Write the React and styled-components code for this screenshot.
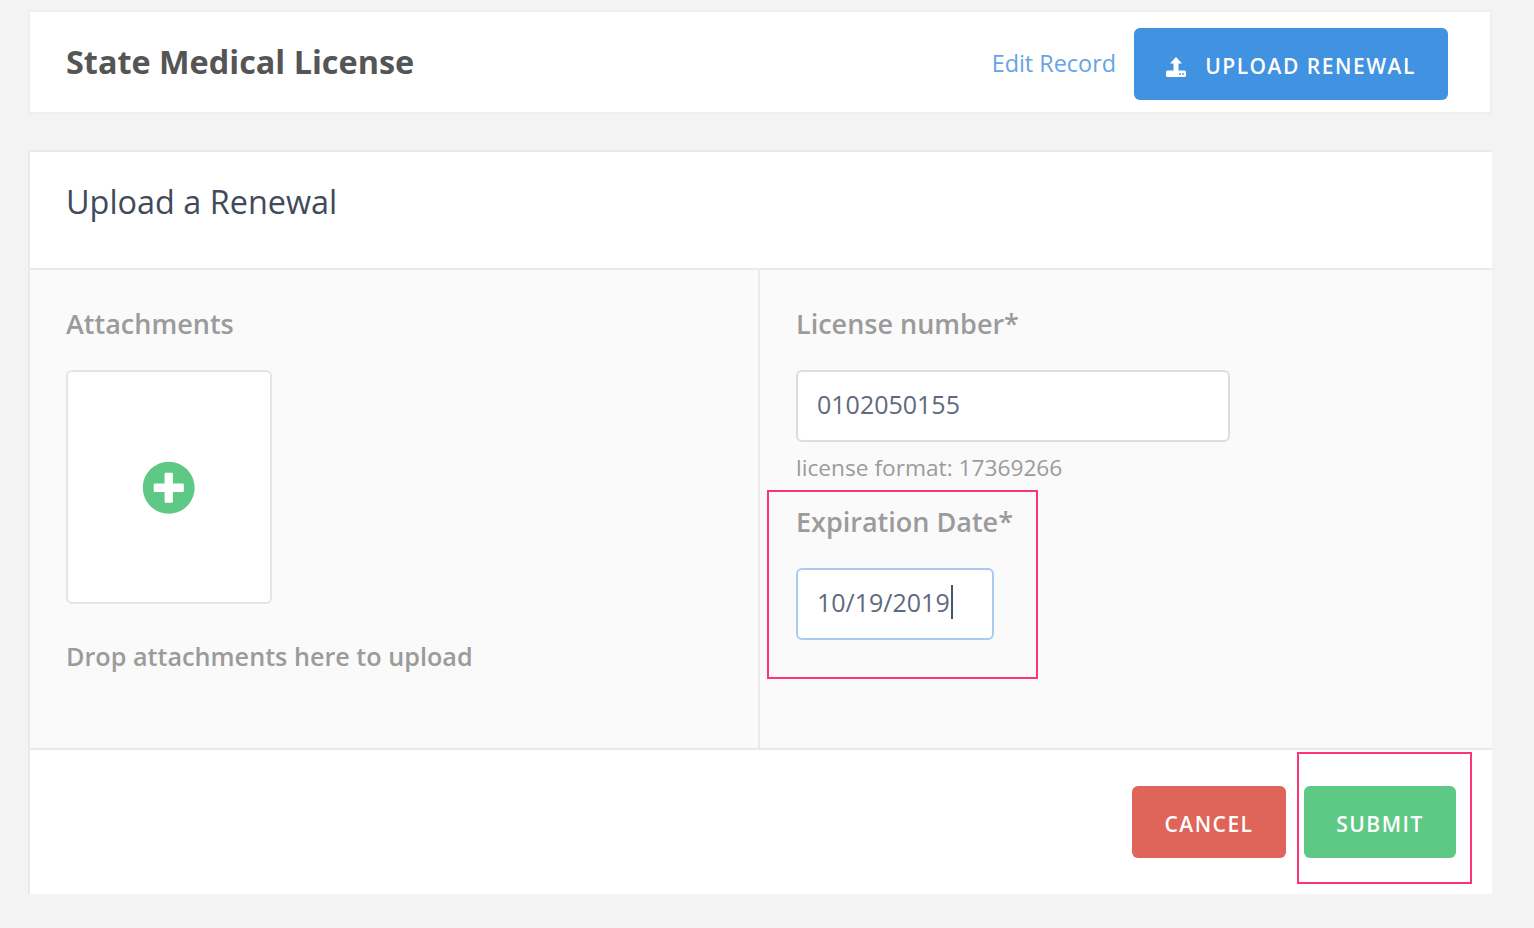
import React from 'react';
import styled, { createGlobalStyle } from 'styled-components';
import { FaPlusCircle } from 'react-icons/fa';

const GlobalStyle = createGlobalStyle`
  html, body {
    margin: 0;
    padding: 0;
    background: #f3f3f3;
    font-family: "Open Sans", "Liberation Sans", sans-serif;
  }
  * {
    box-sizing: border-box;
  }
`;

const UploadIcon = () => (
  <UploadGlyph width="20" height="20" viewBox="0 0 20 20" fill="none">
    <path d="M10 0 L16 6.5 H12.5 V14 H7.5 V6.5 H4 Z" fill="#fff" />
    <rect x="0" y="13.5" width="20" height="6.5" rx="1.5" fill="#fff" />
    <circle cx="14" cy="17" r="0.9" fill="#4192e0" />
    <circle cx="17" cy="17" r="0.9" fill="#4192e0" />
  </UploadGlyph>
);

const App = () => {
  return (
    <Page>
      <GlobalStyle />
      <HeaderCard>
        <Title>State Medical License</Title>
        <HeaderActions>
          <EditLink>Edit Record</EditLink>
          <UploadButton>
            <UploadIcon />
            UPLOAD RENEWAL
          </UploadButton>
        </HeaderActions>
      </HeaderCard>

      <FormCard>
        <FormHeading>Upload a Renewal</FormHeading>
        <FormBody>
          <LeftColumn>
            <Label>Attachments</Label>
            <DropZone>
              <PlusIcon />
            </DropZone>
            <DropHint>Drop attachments here to upload</DropHint>
          </LeftColumn>
          <RightColumn>
            <Label>License number*</Label>
            <TextField $width={434}>0102050155</TextField>
            <FieldHint>license format: 17369266</FieldHint>
            <DateLabel>
              Expiration Date*
              <Highlight $top={-12} $left={-29} $width={271} $height={189} />
            </DateLabel>
            <TextField $width={198} $focused>
              10/19/2019
              <Caret />
            </TextField>
          </RightColumn>
        </FormBody>
        <FormFooter>
          <ActionButton $color="#df6459">CANCEL</ActionButton>
          <SubmitWrap>
            <ActionButton $color="#5ec984" $width={152}>SUBMIT</ActionButton>
            <Highlight $top={-34} $left={-7} $width={175} $height={132} />
          </SubmitWrap>
        </FormFooter>
      </FormCard>
    </Page>
  );
};

export default App;

const Page = styled.div`
  width: 1534px;
  height: 928px;
  padding: 10px 42px 0 28px;
  overflow: hidden;
`;

const HeaderCard = styled.div`
  height: 104px;
  display: flex;
  align-items: center;
  justify-content: space-between;
  padding: 0 42px 0 36px;
  background: #fff;
  border: 2px solid #eeeeee;
`;

const Title = styled.h1`
  margin: 0 0 2px;
  font-size: 32.4px;
  font-weight: 700;
  color: #555555;
`;

const HeaderActions = styled.div`
  display: flex;
  align-items: center;
  gap: 18px;
  margin-top: 4px;
`;

const EditLink = styled.a`
  margin-bottom: 3px;
  font-size: 23.4px;
  color: #65a4e6;
  cursor: pointer;
`;

const UploadButton = styled.button`
  width: 314px;
  height: 72px;
  display: flex;
  align-items: center;
  justify-content: center;
  gap: 19px;
  padding: 4px 0 0;
  border: none;
  border-radius: 6px;
  background: #4192e0;
  color: #fff;
  font-family: inherit;
  font-size: 21px;
  font-weight: 600;
  letter-spacing: 1.5px;
`;

const UploadGlyph = styled.svg`
  margin-top: 1px;
`;

const FormCard = styled.div`
  height: 744px;
  margin-top: 36px;
  display: flex;
  flex-direction: column;
  background: #fff;
  border-top: 2px solid #eaeaea;
  border-left: 2px solid #eaeaea;
`;

const FormHeading = styled.h2`
  height: 118px;
  margin: 0;
  padding: 27px 36px 0;
  font-size: 32.4px;
  font-weight: 400;
  color: #414a5a;
  border-bottom: 2px solid #eaeaea;
`;

const FormBody = styled.div`
  height: 480px;
  display: flex;
  background: #fafafa;
  border-bottom: 2px solid #eaeaea;
`;

const LeftColumn = styled.div`
  width: 730px;
  padding: 34px 36px 0;
  border-right: 2px solid #eaeaea;
`;

const RightColumn = styled.div`
  flex: 1;
  padding: 34px 36px 0;
`;

const Label = styled.div`
  height: 40px;
  font-size: 27px;
  line-height: 40px;
  font-weight: 600;
  color: #9b9b9b;
`;

const DateLabel = styled(Label)`
  position: relative;
  margin-top: 17px;
`;

const DropZone = styled.div`
  width: 206px;
  height: 234px;
  margin-top: 26px;
  display: flex;
  align-items: center;
  justify-content: center;
  background: #fff;
  border: 2px solid #e5e5e5;
  border-radius: 6px;
`;

const PlusIcon = styled(FaPlusCircle)`
  margin-top: 2px;
  color: #5ec984;
  font-size: 53.5px;
`;

const DropHint = styled.div`
  margin-top: 33px;
  font-size: 25.2px;
  line-height: 38px;
  font-weight: 600;
  color: #9b9b9b;
`;

const TextField = styled.div`
  width: ${(props) => props.$width}px;
  height: 72px;
  margin-top: 26px;
  display: flex;
  align-items: center;
  padding: 0 19px 4px;
  background: #fff;
  border: 2px solid ${(props) => (props.$focused ? '#a9cbf0' : '#dddddd')};
  border-radius: 6px;
  font-size: 25px;
  color: #606a7e;
`;

const Caret = styled.span`
  width: 2px;
  height: 34px;
  margin-left: 1px;
  background: #4a5568;
`;

const FieldHint = styled.div`
  margin-top: 9px;
  font-size: 22.7px;
  line-height: 34px;
  color: #9b9b9b;
`;

const Highlight = styled.div`
  position: absolute;
  top: ${(props) => props.$top}px;
  left: ${(props) => props.$left}px;
  width: ${(props) => props.$width}px;
  height: ${(props) => props.$height}px;
  border: 2px solid #ff3473;
  pointer-events: none;
`;

const FormFooter = styled.div`
  flex: 1;
  display: flex;
  justify-content: flex-end;
  gap: 18px;
  padding: 36px 36px 0 0;
`;

const SubmitWrap = styled.div`
  position: relative;
  height: 72px;
`;

const ActionButton = styled.button`
  width: ${(props) => props.$width || 154}px;
  height: 72px;
  padding: 4px 0 0;
  border: none;
  border-radius: 6px;
  background: ${(props) => props.$color};
  color: #fff;
  font-family: inherit;
  font-size: 21px;
  font-weight: 600;
  letter-spacing: 1.5px;
`;
